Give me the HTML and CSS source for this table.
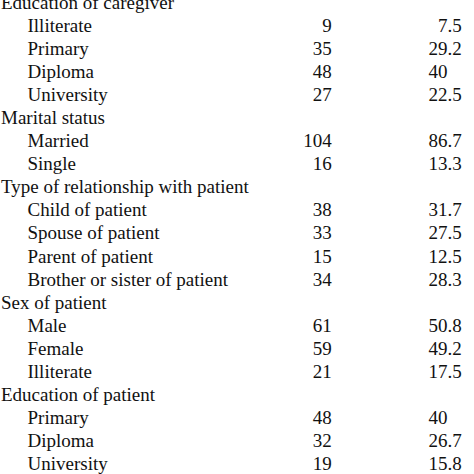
FILE: index.html
```html
<!DOCTYPE html>
<html>
<head>
<meta charset="utf-8">
<link rel="stylesheet" href="styles.css">
</head>
<body>
<table class="stats">
  <colgroup><col class="c-label"><col class="c-n"><col class="c-pct"></colgroup>
  <tbody>
    <tr class="group"><td>Education of caregiver</td><td></td><td></td></tr>
    <tr><td class="sub">Illiterate</td><td class="num">9</td><td class="num">7.5</td></tr>
    <tr><td class="sub">Primary</td><td class="num">35</td><td class="num">29.2</td></tr>
    <tr><td class="sub">Diploma</td><td class="num">48</td><td class="num int">40</td></tr>
    <tr><td class="sub">University</td><td class="num">27</td><td class="num">22.5</td></tr>
    <tr class="group"><td>Marital status</td><td></td><td></td></tr>
    <tr><td class="sub">Married</td><td class="num">104</td><td class="num">86.7</td></tr>
    <tr><td class="sub">Single</td><td class="num">16</td><td class="num">13.3</td></tr>
    <tr class="group"><td>Type of relationship with patient</td><td></td><td></td></tr>
    <tr><td class="sub">Child of patient</td><td class="num">38</td><td class="num">31.7</td></tr>
    <tr><td class="sub">Spouse of patient</td><td class="num">33</td><td class="num">27.5</td></tr>
    <tr><td class="sub">Parent of patient</td><td class="num">15</td><td class="num">12.5</td></tr>
    <tr><td class="sub">Brother or sister of patient</td><td class="num">34</td><td class="num">28.3</td></tr>
    <tr class="group"><td>Sex of patient</td><td></td><td></td></tr>
    <tr><td class="sub">Male</td><td class="num">61</td><td class="num">50.8</td></tr>
    <tr><td class="sub">Female</td><td class="num">59</td><td class="num">49.2</td></tr>
    <tr><td class="sub">Illiterate</td><td class="num">21</td><td class="num">17.5</td></tr>
    <tr class="group"><td>Education of patient</td><td></td><td></td></tr>
    <tr><td class="sub">Primary</td><td class="num">48</td><td class="num int">40</td></tr>
    <tr><td class="sub">Diploma</td><td class="num">32</td><td class="num">26.7</td></tr>
    <tr><td class="sub">University</td><td class="num">19</td><td class="num">15.8</td></tr>
  </tbody>
</table>
</body>
</html>
```

FILE: styles.css
```css
html, body {
  margin: 0;
  padding: 0;
  background: #fff;
}
body {
  overflow: hidden;
  font-family: "Liberation Serif", "Times New Roman", serif;
  font-size: 19px;
  color: #111;
}
.stats {
  border-collapse: collapse;
  border-spacing: 0;
  table-layout: fixed;
  width: 460.7px;
  margin: -9px 0 0 1px;
}
.c-label { width: 230.7px; }
.c-n { width: 100px; }
.c-pct { width: 130px; }
.stats td {
  padding: 0;
  line-height: 23.05px;
  height: 23.05px;
  white-space: nowrap;
  vertical-align: baseline;
}
.stats td.sub {
  padding-left: 26.5px;
}
.stats td.num {
  text-align: right;
}
.stats td.int {
  padding-right: 0.75em;
}
```
